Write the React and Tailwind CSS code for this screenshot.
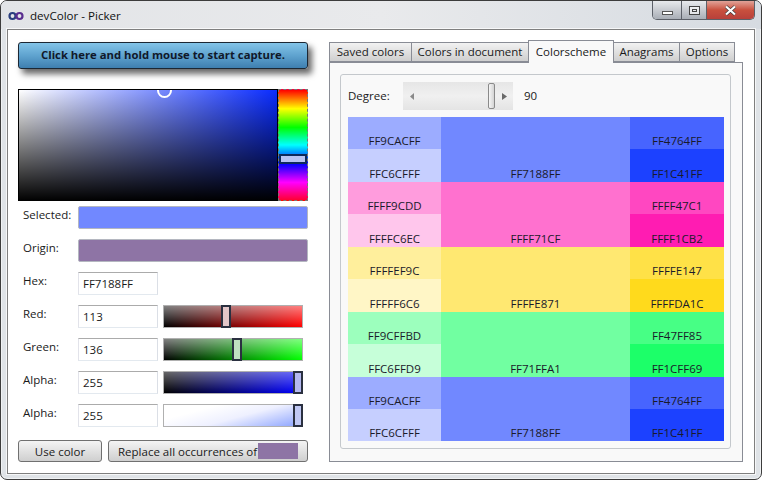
const schemes = [
  { mid: '#7188ff', midText: 'FF7188FF', l1: '#9cacff', l1t: 'FF9CACFF', l2: '#c6cfff', l2t: 'FFC6CFFF', r1: '#4764ff', r1t: 'FF4764FF', r2: '#1c41ff', r2t: 'FF1C41FF' },
  { mid: '#ff71cf', midText: 'FFFF71CF', l1: '#ff9cdd', l1t: 'FFFF9CDD', l2: '#ffc6ec', l2t: 'FFFFC6EC', r1: '#ff47c1', r1t: 'FFFF47C1', r2: '#ff1cb2', r2t: 'FFFF1CB2' },
  { mid: '#ffe871', midText: 'FFFFE871', l1: '#ffef9c', l1t: 'FFFFEF9C', l2: '#fff6c6', l2t: 'FFFFF6C6', r1: '#ffe147', r1t: 'FFFFE147', r2: '#ffda1c', r2t: 'FFFFDA1C' },
  { mid: '#71ffa1', midText: 'FF71FFA1', l1: '#9cffbd', l1t: 'FF9CFFBD', l2: '#c6ffd9', l2t: 'FFC6FFD9', r1: '#47ff85', r1t: 'FF47FF85', r2: '#1cff69', r2t: 'FF1CFF69' },
  { mid: '#7188ff', midText: 'FF7188FF', l1: '#9cacff', l1t: 'FF9CACFF', l2: '#c6cfff', l2t: 'FFC6CFFF', r1: '#4764ff', r1t: 'FF4764FF', r2: '#1c41ff', r2t: 'FF1C41FF' },
]

function Cell({ color, text, className }) {
  return (
    <div className={`flex items-end justify-center text-[11.5px] leading-[16px] text-[#1a1a2a] ${className}`} style={{ backgroundColor: color }}>
      {text}
    </div>
  )
}

function SchemeRow({ s }) {
  return (
    <div className="grid h-[64.9px] grid-cols-[93px_189px_94px] grid-rows-2">
      <Cell color={s.l1} text={s.l1t} />
      <Cell color={s.mid} text={s.midText} className="row-span-2" />
      <Cell color={s.r1} text={s.r1t} />
      <Cell color={s.l2} text={s.l2t} />
      <Cell color={s.r2} text={s.r2t} />
    </div>
  )
}

function Slider({ gradient, thumb, at }) {
  return (
    <div className={`relative h-[23px] w-[140px] border border-[#b0b0b0] ${gradient}`}>
      <div className={`absolute top-[-1px] h-[23px] w-[10px] border-2 border-[#2a3040] ${thumb}`} style={{ left: at }} />
    </div>
  )
}

function Row({ label, value, gradient, thumb, at }) {
  return (
    <div className="flex h-[23px] items-start">
      <span className="ml-[5px] w-[55px] pt-px text-[11.5px] leading-[16px] text-[#1a1a1a]">{label}</span>
      <div className="flex h-[23px] w-20 items-center border border-t-[#ababab] border-r-[#dbdfe6] border-b-[#e3e9ef] border-l-[#e2e3ea] bg-white pl-[4px] text-[11.5px] text-[#1a1a1a]">
        {value}
      </div>
      {gradient && <div className="ml-[5px]"><Slider gradient={gradient} thumb={thumb} at={at} /></div>}
    </div>
  )
}

function Tab({ children, active, className }) {
  if (active) {
    return (
      <div className={`z-10 -mb-px flex h-[23px] items-center justify-center border border-b-0 border-[#898c95] bg-[#f9f9f9] text-[11.5px] text-[#1a1a1a] ${className}`}>
        {children}
      </div>
    )
  }
  return (
    <div className={`flex h-[20px] items-center justify-center border border-[#898c95] bg-gradient-to-b from-[#f2f2f2] to-[#cfcfcf] text-[11.5px] text-[#1a1a1a] ${className}`}>
      {children}
    </div>
  )
}

export default function App() {
  return (
    <div className="flex h-[480px] w-[762px] flex-col overflow-hidden rounded-[7px] border border-[#3c3c3c] bg-[#dfe3e7] font-['Open_Sans','Noto_Sans',sans-serif] shadow-[inset_0_0_0_1px_#f0f2f4]">
      <div className="flex h-[28px] shrink-0 items-start justify-between bg-gradient-to-r from-[#e2e4e7] via-[#e9eaec] to-[#d6dbe1] pl-[7px] pr-[6px]">
        <div className="flex items-center gap-[6px] pt-[6px]">
          <svg width="16" height="10" viewBox="0 0 16 10" fill="none">
            <circle cx="4.5" cy="5" r="3" stroke="#2a3f7f" strokeWidth="2.2" />
            <circle cx="11.5" cy="5" r="3" stroke="#5a2f90" strokeWidth="2.2" />
          </svg>
          <span className="text-[11.6px] leading-[18px] text-[#111]">devColor - Picker</span>
        </div>
        <div className="flex h-[19px] w-[103px] overflow-hidden rounded-b-[5px] border border-t-0 border-[#5c6068]">
          <div className="flex w-[28px] items-end justify-center bg-gradient-to-b from-[#e8eaed] to-[#a9aeb6] pb-[4px]">
            <div className="h-[4px] w-[11px] border border-[#555] bg-white" />
          </div>
          <div className="flex w-[26px] items-center justify-center border-x border-[#5c6068] bg-gradient-to-b from-[#e8eaed] to-[#a9aeb6]">
            <div className="flex h-[9px] w-[11px] items-center justify-center border border-[#444] bg-white/60">
              <div className="h-[3px] w-[5px] border border-[#444]" />
            </div>
          </div>
          <div className="flex flex-1 items-center justify-center bg-gradient-to-b from-[#e0a298] via-[#c9503e] to-[#b8403a]">
            <svg width="13" height="11" viewBox="0 0 13 11">
              <path d="M2 1.5 L11 9.5 M11 1.5 L2 9.5" stroke="#3a3a3a" strokeWidth="3.4" />
              <path d="M2 1.5 L11 9.5 M11 1.5 L2 9.5" stroke="#fff" strokeWidth="2.2" />
            </svg>
          </div>
        </div>
      </div>

      <div className="mx-[6px] flex h-[445px] shrink-0 border border-[#7f7f7f] bg-white pl-[10px] pt-[12px] shadow-[0_0_0_1px_rgba(255,255,255,0.7)]">
        <div className="flex w-[290px] flex-col">
          <div className="flex h-[27px] items-center justify-center rounded-[3px] border border-[#1c2733] bg-gradient-to-b from-[#83c4e8] via-[#5fa3cf] to-[#3e7fb0] text-[11.3px] font-bold text-[#10182a] shadow-[4px_5px_6px_rgba(0,0,0,0.6)]">
            Click here and hold mouse to start capture.
          </div>

          <div className="mt-5 flex h-[112px]">
            <div className="relative h-full w-[260px] overflow-hidden border-t border-r border-l border-black bg-[linear-gradient(to_bottom,transparent,#000),linear-gradient(to_right,#fff,#0a2cff)]">
              <div className="absolute left-[138px] top-[-7px] h-[15px] w-[15px] rounded-full border-2 border-white" />
            </div>
            <div className="relative h-full w-[30px] border border-dashed border-[#777] bg-[linear-gradient(to_bottom,#f00,#ff0_17%,#0f0_34%,#0ff_50%,#00f_67%,#f0f_84%,#f03)]">
              <div className="absolute left-0 right-0 top-[64px] h-[10px] border-2 border-[#0d2a5c] bg-[#b8c4f4]" />
            </div>
          </div>

          <div className="mt-[5px] flex h-[23px] items-start">
            <span className="ml-[5px] w-[55px] pt-px text-[11.5px] leading-[16px] text-[#1a1a1a]">Selected:</span>
            <div className="h-full flex-1 rounded-[2px] border border-[#b4b7c0] bg-[#7188ff]" />
          </div>
          <div className="mt-[10px] flex h-[23px] items-start">
            <span className="ml-[5px] w-[55px] pt-px text-[11.5px] leading-[16px] text-[#1a1a1a]">Origin:</span>
            <div className="h-full flex-1 rounded-[2px] border border-[#b4b7c0] bg-[#8e74a5]" />
          </div>

          <div className="mt-[10px] flex flex-col gap-[10px]">
            <Row label="Hex:" value="FF7188FF" />
            <Row label="Red:" value="113" at="57px" thumb="bg-[#e2c6c8]"
              gradient="bg-[linear-gradient(to_bottom,rgba(255,255,255,0.5),transparent),linear-gradient(to_right,#000,#f00)]" />
            <Row label="Green:" value="136" at="68px" thumb="bg-[#c0e0c0]"
              gradient="bg-[linear-gradient(to_bottom,rgba(255,255,255,0.5),transparent),linear-gradient(to_right,#000,#0f0)]" />
            <Row label="Alpha:" value="255" at="129px" thumb="bg-[#b4b8f0]"
              gradient="bg-[linear-gradient(to_bottom,rgba(255,255,255,0.4),transparent),linear-gradient(to_right,#000,#00f)]" />
            <Row label="Alpha:" value="255" at="129px" thumb="bg-[#c0c8f4]"
              gradient="bg-[linear-gradient(165deg,#fff_25%,#eef0ff_55%,#8aa2ff)]" />
          </div>

          <div className="mt-[13px] flex h-[22px] gap-[6px] text-[11.5px] text-[#1a1a1a]">
            <div className="flex w-[84px] items-center justify-center rounded-[3px] border border-[#707070] bg-gradient-to-b from-[#f4f4f4] to-[#cfcfcf] pt-px">
              Use color
            </div>
            <div className="flex w-[200px] items-center rounded-[3px] border border-[#707070] bg-gradient-to-b from-[#f4f4f4] to-[#cfcfcf] pl-[9px]">
              <span className="w-[140px] whitespace-nowrap pt-px">Replace all occurrences of</span>
              <div className="h-4 w-10 bg-[#8e74a5]" />
            </div>
          </div>
        </div>

        <div className="ml-[21px] flex w-[414px] flex-col">
          <div className="-mt-[2px] flex h-[22px] items-end">
            <Tab className="w-[83px]">Saved colors</Tab>
            <Tab className="ml-[-1px] w-[118px]">Colors in document</Tab>
            <Tab active className="ml-[-1px] w-[86px]">Colorscheme</Tab>
            <Tab className="ml-[-1px] w-[67px]">Anagrams</Tab>
            <Tab className="ml-[-1px] w-[56px]">Options</Tab>
          </div>
          <div className="h-[400px] border border-[#898c95] bg-[#f9f9f9] pl-[10px] pr-[11px] pt-[11px]">
            <div className="h-[375px] rounded-[3px] border border-[#c4c8cc] bg-[#f9f9f9] px-[7px] pt-[7px]">
              <div className="flex h-[28px] items-center text-[11.5px] text-[#1a1a1a]">
                <span className="w-[55px]">Degree:</span>
                <div className="flex h-[28px] w-[110px] items-center bg-gradient-to-b from-[#e6e6e6] via-[#f0f0f0] to-[#e4e4e4] pl-[7px]">
                  <svg width="5" height="7" viewBox="0 0 5 7"><path d="M4 0 L4 7 L0 3.5 Z" fill="#8a8a8a" /></svg>
                  <div className="ml-[73px] h-[26px] w-[7px] rounded-[2px] border border-[#8a8a8a] bg-gradient-to-r from-[#f6f6f6] to-[#d4d4d4]" />
                  <svg className="ml-[7px]" width="5" height="7" viewBox="0 0 5 7"><path d="M0 0 L0 7 L5 3.5 Z" fill="#6a6a6a" /></svg>
                </div>
                <span className="ml-[11px]">90</span>
              </div>
              <div className="mt-[7px] flex flex-col">
                {schemes.map((s, i) => (
                  <SchemeRow key={i} s={s} />
                ))}
              </div>
            </div>
          </div>
        </div>
      </div>
    </div>
  )
}
